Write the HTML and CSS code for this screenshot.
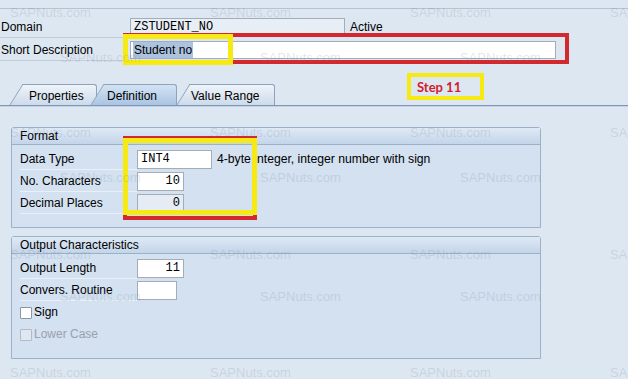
FILE: index.html
```html
<!DOCTYPE html>
<html lang="en">
<head>
    <meta charset="UTF-8">
    <title>Change Data Element</title>
    <link rel="stylesheet" href="styles.css">
</head>
<body>
<div class="screen">
    <div class="topbar"></div>

    <div class="head">
        <div class="frow">
            <span class="lbl">Domain</span>
            <span class="inp mono dom">ZSTUDENT_NO</span>
            <span class="status">Active</span>
        </div>
        <div class="frow">
            <span class="lbl">Short Description</span>
            <span class="inp desc"><span class="sel">Student no</span></span>
        </div>
    </div>

    <div class="tabs">
        <div class="tab t-props">Properties</div>
        <div class="tab t-def active">Definition</div>
        <div class="tab t-range">Value Range</div>
    </div>

    <div class="tabpage">
        <div class="group">
            <div class="grp-title">Format</div>
            <div class="grp-body">
                <div class="grow">
                    <span class="lbl">Data Type</span>
                    <span class="inp mono w-type">INT4</span>
                    <span class="note">4-byte integer, integer number with sign</span>
                </div>
                <div class="grow">
                    <span class="lbl">No. Characters</span>
                    <span class="inp mono num">10</span>
                </div>
                <div class="grow">
                    <span class="lbl">Decimal Places</span>
                    <span class="inp mono num ro">0</span>
                </div>
            </div>
        </div>

        <div class="group second">
            <div class="grp-title">Output Characteristics</div>
            <div class="grp-body">
                <div class="grow">
                    <span class="lbl">Output Length</span>
                    <span class="inp mono num">11</span>
                </div>
                <div class="grow">
                    <span class="lbl">Convers. Routine</span>
                    <span class="inp mono w-conv"></span>
                </div>
                <div class="grow">
                    <span class="cb"></span><span>Sign</span>
                </div>
                <div class="grow off">
                    <span class="cb"></span><span>Lower Case</span>
                </div>
            </div>
        </div>
    </div>

    <!-- tutorial markers -->
    <div class="mark red desc-red"></div>
    <div class="mark yellow desc-yellow"></div>
    <div class="mark yellow step">Step 11</div>
    <div class="mark red fmt-red"></div>
    <div class="mark yellow fmt-yellow"></div>

    <!-- watermark -->
    <span class="wm" style="left:10px;top:5px">SAPNuts.com</span>
    <span class="wm" style="left:210px;top:5px">SAPNuts.com</span>
    <span class="wm" style="left:410px;top:5px">SAPNuts.com</span>
    <span class="wm" style="left:610px;top:5px">SAPNuts.com</span>
    <span class="wm" style="left:60px;top:50px">SAPNuts.com</span>
    <span class="wm" style="left:260px;top:50px">SAPNuts.com</span>
    <span class="wm" style="left:460px;top:50px">SAPNuts.com</span>
    <span class="wm" style="left:10px;top:125px">SAPNuts.com</span>
    <span class="wm" style="left:210px;top:125px">SAPNuts.com</span>
    <span class="wm" style="left:410px;top:125px">SAPNuts.com</span>
    <span class="wm" style="left:610px;top:125px">SAPNuts.com</span>
    <span class="wm" style="left:60px;top:170px">SAPNuts.com</span>
    <span class="wm" style="left:260px;top:170px">SAPNuts.com</span>
    <span class="wm" style="left:460px;top:170px">SAPNuts.com</span>
    <span class="wm" style="left:10px;top:247px">SAPNuts.com</span>
    <span class="wm" style="left:210px;top:247px">SAPNuts.com</span>
    <span class="wm" style="left:410px;top:247px">SAPNuts.com</span>
    <span class="wm" style="left:610px;top:247px">SAPNuts.com</span>
    <span class="wm" style="left:60px;top:289px">SAPNuts.com</span>
    <span class="wm" style="left:260px;top:289px">SAPNuts.com</span>
    <span class="wm" style="left:460px;top:289px">SAPNuts.com</span>
    <span class="wm" style="left:10px;top:365px">SAPNuts.com</span>
    <span class="wm" style="left:210px;top:365px">SAPNuts.com</span>
    <span class="wm" style="left:410px;top:365px">SAPNuts.com</span>
    <span class="wm" style="left:610px;top:365px">SAPNuts.com</span>
</div>
</body>
</html>
```

FILE: styles.css
```css
body {
    margin: 0;
    background-color: #dde7f1;
    font-family: "Liberation Sans", Arial, sans-serif;
    font-size: 12px;
    color: #000;
}
.screen {
    position: relative;
    width: 628px;
    height: 379px;
    overflow: hidden;
}
.topbar {
    height: 8px;
    border-bottom: 1px solid #b5c2cf;
}
.head {
    padding-top: 6px;
}
.frow {
    display: flex;
    align-items: center;
    height: 23px;
}
.frow .lbl {
    width: 130px;
    align-self: stretch;
    display: flex;
    align-items: center;
    box-sizing: border-box;
    padding: 1px 0 0 1px;
    border-bottom: 1px solid #c4ccd5;
}
.inp {
    display: flex;
    align-items: center;
    height: 19px;
    box-sizing: border-box;
    padding: 0 3px;
    border: 1px solid #a3acb7;
    background-color: #fff;
}
.mono {
    font-family: "Liberation Mono", "Courier New", monospace;
    font-size: 12px;
}
.dom {
    width: 215px;
    height: 18px;
    background-color: #e8eef5;
}
.status {
    margin-left: 5px;
}
.desc {
    width: 426px;
    height: 18px;
    padding-left: 2px;
}
.sel {
    background-color: #abc3df;
    padding: 1px 1px;
}

/* tabs */
.tabs {
    display: flex;
    height: 21px;
    margin-top: 23px;
    padding-left: 23px;
    border-bottom: 1px solid #7f97b4;
    box-shadow: 0 1px 0 #c3d3e5;
}
.tab {
    position: relative;
    z-index: 1;
    height: 21px;
    box-sizing: border-box;
    padding-top: 4px;
    border: 1px solid #8ea4be;
    border-left: none;
    border-bottom: none;
    border-radius: 0 3px 0 0;
    background: linear-gradient(#eef3f9, #cddbea);
}
.tab::before {
    content: "";
    position: absolute;
    z-index: -1;
    top: -1px;
    bottom: 0;
    left: -7px;
    width: 16px;
    border-left: 1px solid #8ea4be;
    border-top: 1px solid #8ea4be;
    background: linear-gradient(#eef3f9, #cddbea);
    transform: skewX(-32deg);
}
.t-props {
    width: 74px;
    padding-left: 6px;
}
.t-def {
    width: 73px;
    margin-left: 7px;
    padding-left: 3px;
    z-index: 3;
}
.t-range {
    width: 85px;
    margin-left: 13px;
    padding-left: 1px;
    z-index: 2;
}
.tab.active,
.tab.active::before {
    background: linear-gradient(#d3e3f4, #aac4e2);
}

/* tab page */
.tabpage {
    padding: 21px 0 0 11px;
}
.group {
    width: 530px;
    box-sizing: border-box;
    border: 1px solid #9cb0c7;
    border-radius: 3px 3px 0 0;
    background-color: #d3e1f0;
}
.group.second {
    margin-top: 8px;
}
.grp-title {
    height: 16px;
    line-height: 17px;
    padding-left: 8px;
    border-bottom: 1px solid #9cb0c7;
    background: linear-gradient(#dfe9f5, #c3d5e9);
}
.grp-body {
    padding: 3px 8px 13px;
}
.grow {
    display: flex;
    align-items: center;
    height: 22px;
}
.grow .lbl {
    width: 117px;
    align-self: stretch;
    display: flex;
    align-items: center;
    box-sizing: border-box;
    padding-top: 1px;
    border-bottom: 1px solid rgba(255, 255, 255, 0.5);
}
.w-type {
    width: 75px;
}
.num {
    width: 47px;
    justify-content: flex-end;
}
.ro {
    background-color: #e6ecf3;
}
.w-conv {
    width: 40px;
}
.note {
    margin-left: 5px;
    font-size: 12.2px;
}
.cb {
    width: 12px;
    height: 12px;
    box-sizing: border-box;
    margin: 1px 2px 0 0;
    border: 1px solid #8b97a6;
    border-radius: 1px;
    background-color: #fff;
}
.grow.off {
    color: #98a2ad;
}
.grow.off .cb {
    border-color: #b1bbc6;
    background-color: #dfe7f0;
}

/* tutorial markers */
.mark {
    position: absolute;
    box-sizing: border-box;
}
.red {
    border: 4px solid #d4282f;
}
.yellow {
    border: 5px solid #f6ea12;
}
.desc-red {
    left: 123px;
    top: 33px;
    width: 446px;
    height: 31px;
}
.desc-yellow {
    left: 123px;
    top: 34px;
    width: 110px;
    height: 31px;
}
.step {
    left: 407px;
    top: 73px;
    width: 77px;
    height: 27px;
    border-width: 4px;
    padding: 2px 0 0 6px;
    color: #d3212b;
    font-family: Lato, "Open Sans", sans-serif;
    font-weight: bold;
    font-size: 13px;
}
.fmt-red {
    left: 123px;
    top: 136px;
    width: 134px;
    height: 84px;
}
.fmt-yellow {
    left: 123px;
    top: 138px;
    width: 134px;
    height: 77px;
}

.wm {
    position: absolute;
    font-family: "Liberation Sans", Arial, sans-serif;
    font-size: 13px;
    color: rgba(110, 125, 145, 0.2);
    pointer-events: none;
    white-space: nowrap;
}
```
